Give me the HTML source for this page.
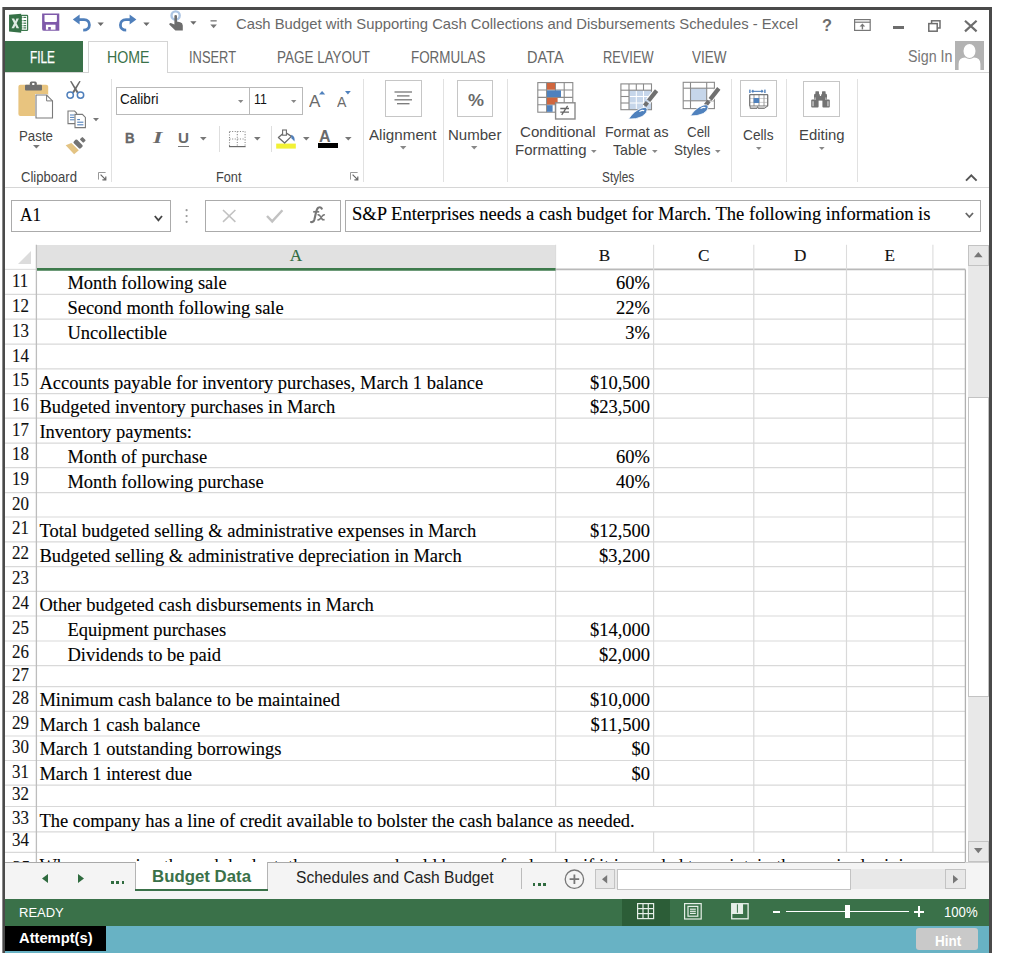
<!DOCTYPE html>
<html><head><meta charset="utf-8"><title>Excel</title>
<style>
html,body{margin:0;padding:0;width:1024px;height:958px;overflow:hidden;background:#fff;position:relative}
svg{display:block}
.sf{-webkit-text-stroke:0.12px currentColor}
</style></head><body>
<svg style="position:absolute;left:6px;top:11px;overflow:visible" width="26" height="24" viewBox="0 0 26 24">
<rect x="15.2" y="4.3" width="6.4" height="15" rx="0.6" fill="#fff" stroke="#3d7a4e" stroke-width="1.2"/>
<g fill="#3d7a4e"><rect x="17.4" y="5.8" width="2.8" height="1.2"/><rect x="17.4" y="9" width="2.8" height="1.2"/><rect x="17.4" y="11.6" width="2.8" height="1.2"/><rect x="17.4" y="14.1" width="2.8" height="1.2"/><rect x="17.4" y="16.3" width="2.8" height="1.2"/>
<rect x="15" y="5.8" width="1.4" height="1.2"/><rect x="15" y="9" width="1.4" height="1.2"/><rect x="15" y="11.6" width="1.4" height="1.2"/><rect x="15" y="14.1" width="1.4" height="1.2"/><rect x="15" y="16.3" width="1.4" height="1.2"/></g>
<path d="M3.05 3.8 L15.2 2.8 L15.2 21.8 L3.05 20.6 Z" fill="#367147"/>
<path d="M5.6 7.6 L8.2 7.6 L9.3 10.2 L10.4 7.6 L12.9 7.6 L10.6 12.3 L13.1 17.3 L10.5 17.3 L9.3 14.6 L8.1 17.3 L5.5 17.3 L8 12.3 Z" fill="#dfeae2"/>
</svg>
<svg style="position:absolute;left:38px;top:10px;overflow:visible" width="26" height="24" viewBox="0 0 26 24">
<path d="M4.1 3.55 L21.3 3.55 L21.3 20.8 L6 20.8 Q4.1 20.8 4.1 18.9 Z" fill="#7f5aaa"/>
<path d="M6.5 4.95 L18.9 4.95 L18.9 10.9 Q18.9 11.9 17.9 11.9 L7.5 11.9 Q6.5 11.9 6.5 10.9 Z" fill="#fff"/>
<rect x="7.9" y="14.7" width="9.6" height="5" fill="#fff"/>
<rect x="10.2" y="17" width="2.6" height="2.8" fill="#7f5aaa"/>
</svg>
<svg style="position:absolute;left:72px;top:14px;overflow:visible" width="20" height="18" viewBox="0 0 20 18">
<path d="M3 5.6 L12 5.6 C15.6 5.6 17.4 8.2 17.4 11 C17.4 13.8 15.2 16.2 11.2 16.2" fill="none" stroke="#4f7fbb" stroke-width="2.8"/>
<path d="M0.8 5.6 L7.6 0.6 L7.6 10.6 Z" fill="#4f7fbb"/>
</svg>
<svg style="position:absolute;left:97px;top:21.8px;overflow:visible" width="8" height="5" viewBox="0 0 8 5"><path d="M0.5 0.5 L6.8 0.5 L3.65 4 Z" fill="#6a6a6a"/></svg>
<svg style="position:absolute;left:118px;top:14px;overflow:visible" width="20" height="18" viewBox="0 0 20 18">
<path d="M16 5.6 L8 5.6 C4.4 5.6 2.4 8.2 2.4 11 C2.4 13.8 4.6 16.2 8.2 16.2" fill="none" stroke="#4f7fbb" stroke-width="2.8"/>
<path d="M18.4 5.6 L11.6 0.6 L11.6 10.6 Z" fill="#4f7fbb"/>
</svg>
<svg style="position:absolute;left:143px;top:22px;overflow:visible" width="8" height="5" viewBox="0 0 8 5"><path d="M0.3 0.4 L6.6 0.4 L3.45 3.9 Z" fill="#6a6a6a"/></svg>
<svg style="position:absolute;left:167px;top:10px;overflow:visible" width="18" height="22" viewBox="0 0 18 22">
<circle cx="8.6" cy="5.5" r="4.1" fill="none" stroke="#adc5e3" stroke-width="2.4"/>
<path d="M7.4 5.6 Q8.7 4.4 10 5.6 L10 11.4 L13.2 12.2 Q15.6 12.8 15.8 15.4 L15.8 20.4 L8.4 20.4 L2.2 14.6 Q2.2 12.6 4.4 13.2 L7.4 14.6 Z" fill="#6d6d6d"/>
</svg>
<svg style="position:absolute;left:190px;top:21px;overflow:visible" width="8" height="5" viewBox="0 0 8 5"><path d="M0.3 0.2 L6.5 0.2 L3.4 3.8 Z" fill="#6a6a6a"/></svg>
<svg style="position:absolute;left:209.5px;top:20px;overflow:visible" width="8" height="9" viewBox="0 0 8 9"><rect x="0.5" y="0.2" width="6.2" height="1.3" fill="#777"/><path d="M0.3 4.4 L6.9 4.4 L3.6 8.2 Z" fill="#777"/></svg>
<span style="position:absolute;left:236.00px;top:16.02px;line-height:16.76px;font-family:'Liberation Sans', sans-serif;font-size:15px;font-weight:400;color:#686868;white-space:pre;transform:scaleX(0.9883);transform-origin:left 0;">Cash Budget with Supporting Cash Collections and Disbursements Schedules - Excel</span>
<span style="position:absolute;left:821.50px;top:16.52px;line-height:17.88px;font-family:'Liberation Sans', sans-serif;font-size:16px;font-weight:700;color:#6d6d6d;white-space:pre;transform:scaleX(1.0224);transform-origin:left 0;">?</span>
<svg style="position:absolute;left:854px;top:19px;overflow:visible" width="17" height="12" viewBox="0 0 17 12">
<rect x="0.6" y="0.6" width="15.6" height="10.8" fill="none" stroke="#777" stroke-width="1.2"/>
<line x1="0.6" y1="3.2" x2="16.2" y2="3.2" stroke="#777" stroke-width="1.2"/>
<path d="M8.4 4.6 L11.2 7.4 L5.6 7.4 Z" fill="#777"/><rect x="7.7" y="7" width="1.4" height="3.4" fill="#777"/>
</svg>
<div style="position:absolute;left:893px;top:26px;width:11px;height:2.6px;background:#6d6d6d"></div>
<svg style="position:absolute;left:928px;top:19.5px;overflow:visible" width="13" height="12" viewBox="0 0 13 12">
<rect x="3.6" y="0.8" width="8.4" height="7.2" fill="none" stroke="#6d6d6d" stroke-width="1.5"/>
<rect x="0.8" y="3.6" width="8.4" height="7.6" fill="#fff" stroke="#6d6d6d" stroke-width="1.5"/>
</svg>
<svg style="position:absolute;left:964px;top:19.5px;overflow:visible" width="13.5" height="12" viewBox="0 0 13.5 12"><path d="M1 0.8 L12.6 11.4 M12.6 0.8 L1 11.4" stroke="#6d6d6d" stroke-width="2.2"/></svg>
<div style="position:absolute;left:5px;top:41px;width:78px;height:31px;background:#3a7149"></div>
<span style="position:absolute;left:30.00px;top:49.18px;line-height:17.43px;font-family:'Liberation Sans', sans-serif;font-size:15.6px;font-weight:400;color:#fff;white-space:pre;transform:scaleX(0.7590);transform-origin:left 0;-webkit-text-stroke:0.25px #fff;">FILE</span>
<div style="position:absolute;left:5px;top:72px;width:83px;height:1px;background:#d4d4d4"></div>
<div style="position:absolute;left:168px;top:72px;width:821px;height:1px;background:#d4d4d4"></div>
<div style="position:absolute;left:88px;top:41px;width:80px;height:32px;box-sizing:border-box;border:1px solid #d4d4d4;border-bottom:none;background:#fff"></div>
<span style="position:absolute;left:107.00px;top:49.18px;line-height:17.43px;font-family:'Liberation Sans', sans-serif;font-size:15.6px;font-weight:400;color:#3a7149;white-space:pre;transform:scaleX(0.9085);transform-origin:left 0;">HOME</span>
<span style="position:absolute;left:188.80px;top:49.18px;line-height:17.43px;font-family:'Liberation Sans', sans-serif;font-size:15.6px;font-weight:400;color:#666;white-space:pre;transform:scaleX(0.8259);transform-origin:left 0;">INSERT</span>
<span style="position:absolute;left:277.00px;top:49.18px;line-height:17.43px;font-family:'Liberation Sans', sans-serif;font-size:15.6px;font-weight:400;color:#666;white-space:pre;transform:scaleX(0.8631);transform-origin:left 0;">PAGE LAYOUT</span>
<span style="position:absolute;left:411.00px;top:49.18px;line-height:17.43px;font-family:'Liberation Sans', sans-serif;font-size:15.6px;font-weight:400;color:#666;white-space:pre;transform:scaleX(0.8597);transform-origin:left 0;">FORMULAS</span>
<span style="position:absolute;left:526.60px;top:49.18px;line-height:17.43px;font-family:'Liberation Sans', sans-serif;font-size:15.6px;font-weight:400;color:#666;white-space:pre;transform:scaleX(0.9317);transform-origin:left 0;">DATA</span>
<span style="position:absolute;left:603.00px;top:49.18px;line-height:17.43px;font-family:'Liberation Sans', sans-serif;font-size:15.6px;font-weight:400;color:#666;white-space:pre;transform:scaleX(0.8209);transform-origin:left 0;">REVIEW</span>
<span style="position:absolute;left:692.00px;top:49.18px;line-height:17.43px;font-family:'Liberation Sans', sans-serif;font-size:15.6px;font-weight:400;color:#666;white-space:pre;transform:scaleX(0.8655);transform-origin:left 0;">VIEW</span>
<span style="position:absolute;left:907.50px;top:48.08px;line-height:17.43px;font-family:'Liberation Sans', sans-serif;font-size:15.6px;font-weight:400;color:#777;white-space:pre;transform:scaleX(0.9163);transform-origin:left 0;">Sign In</span>
<svg style="position:absolute;left:955px;top:41px;overflow:visible" width="29" height="29" viewBox="0 0 29 29">
<rect width="29" height="29" fill="#b3b3b3"/>
<ellipse cx="14.5" cy="10" rx="6" ry="7" fill="#fff"/>
<path d="M3.6 29 L3.6 23 Q3.6 17 10 16.6 Q14.5 19.4 19 16.6 Q25.4 17 25.4 23 L25.4 29 Z" fill="#fff"/>
</svg>
<div style="position:absolute;left:5px;top:186.5px;width:984px;height:1px;background:#d6d6d6"></div>
<div style="position:absolute;left:110.5px;top:78.5px;width:1px;height:103px;background:#e1e1e1"></div>
<div style="position:absolute;left:362.5px;top:78.5px;width:1px;height:103px;background:#e1e1e1"></div>
<div style="position:absolute;left:442.5px;top:78.5px;width:1px;height:103px;background:#e1e1e1"></div>
<div style="position:absolute;left:506.5px;top:78.5px;width:1px;height:103px;background:#e1e1e1"></div>
<div style="position:absolute;left:730.5px;top:78.5px;width:1px;height:103px;background:#e1e1e1"></div>
<div style="position:absolute;left:786.2px;top:78.5px;width:1px;height:103px;background:#e1e1e1"></div>
<div style="position:absolute;left:856.6px;top:78.5px;width:1px;height:103px;background:#e1e1e1"></div>
<svg style="position:absolute;left:18px;top:81px;overflow:visible" width="36" height="38" viewBox="0 0 36 38">
<rect x="0.4" y="3.8" width="29.8" height="31.2" rx="2" fill="#e8c47f"/>
<rect x="7" y="3.8" width="17" height="5.6" rx="1" fill="#6f6f6f"/>
<rect x="11.8" y="0.6" width="7" height="5" rx="1.6" fill="#6f6f6f"/>
<rect x="14.2" y="2" width="2.2" height="2" fill="#fff"/>
<path d="M17 13 L29 13 L35.5 19.5 L35.5 38 L17 38 Z" fill="#fff"/>
<path d="M18 14 L28.6 14 L34.5 19.9 L34.5 37 L18 37 Z" fill="#fff" stroke="#7a7a7a" stroke-width="1.1"/>
<path d="M28.6 14 L28.6 19.9 L34.5 19.9" fill="none" stroke="#7a7a7a" stroke-width="1"/>
</svg>
<span style="position:absolute;left:19.30px;top:128.18px;line-height:16.31px;font-family:'Liberation Sans', sans-serif;font-size:14.6px;font-weight:400;color:#444;white-space:pre;transform:scaleX(0.9108);transform-origin:left 0;">Paste</span>
<svg style="position:absolute;left:33px;top:145px;overflow:visible" width="7" height="4" viewBox="0 0 7 4"><path d="M0 0 L6.8 0 L3.4 3.4 Z" fill="#777"/></svg>
<svg style="position:absolute;left:66px;top:80px;overflow:visible" width="19" height="20" viewBox="0 0 19 20">
<path d="M4 1.2 L5.4 0.9 L12.6 12.2 L10.8 13.2 Z" fill="#6a6a6a"/>
<path d="M14.7 1.2 L13.3 0.9 L6.1 12.2 L7.9 13.2 Z" fill="#6a6a6a"/>
<circle cx="4.2" cy="15.1" r="3.2" fill="none" stroke="#4f7fbb" stroke-width="1.5"/>
<circle cx="14.5" cy="15.1" r="3.2" fill="none" stroke="#4f7fbb" stroke-width="1.5"/>
</svg>
<svg style="position:absolute;left:66.5px;top:109.5px;overflow:visible" width="20" height="19" viewBox="0 0 20 19">
<path d="M1 1 L7.6 1 L9.6 3 L9.6 13.6 L1 13.6 Z" fill="#fff" stroke="#7a7a7a" stroke-width="1.1"/>
<g stroke="#4f7fbb" stroke-width="1"><line x1="3" y1="5" x2="7.5" y2="5"/><line x1="3" y1="7.4" x2="7.5" y2="7.4"/><line x1="3" y1="9.8" x2="7.5" y2="9.8"/></g>
<path d="M8 4.4 L15.4 4.4 L18.4 7.4 L18.4 17.6 L8 17.6 Z" fill="#fff" stroke="#7a7a7a" stroke-width="1.1"/>
<g stroke="#4f7fbb" stroke-width="1.1"><line x1="10.2" y1="9.6" x2="13" y2="9.6"/><line x1="10.2" y1="12.2" x2="16.4" y2="12.2"/><line x1="10.2" y1="14.8" x2="16.4" y2="14.8"/></g>
</svg>
<svg style="position:absolute;left:93px;top:117.6px;overflow:visible" width="7" height="4" viewBox="0 0 7 4"><path d="M0 0 L6 0 L3 3.2 Z" fill="#777"/></svg>
<svg style="position:absolute;left:60px;top:132px;overflow:visible" width="30" height="26" viewBox="0 0 30 26">
<path d="M5.7 13.2 L11.4 11.1 L18.8 18.2 L14.1 22.3 Z" fill="#e3c383"/>
<rect x="-4.9" y="-2.4" width="9.8" height="4.8" rx="1.3" fill="#737373" transform="translate(18.1 12.1) rotate(45)"/>
<rect x="-2.5" y="-1.9" width="5" height="3.8" rx="0.9" fill="#737373" transform="translate(22.8 7.9) rotate(45)"/>
</svg>
<span style="position:absolute;left:21.30px;top:169.71px;line-height:15.42px;font-family:'Liberation Sans', sans-serif;font-size:13.8px;font-weight:400;color:#444;white-space:pre;transform:scaleX(0.9481);transform-origin:left 0;">Clipboard</span>
<svg style="position:absolute;left:97.5px;top:172px;overflow:visible" width="9" height="8.5" viewBox="0 0 9 8.5">
<path d="M0.5 7.6 L0.5 0.5 L7.6 0.5" fill="none" stroke="#999" stroke-width="1"/>
<path d="M2.6 2.6 L7.6 7.6 M7.8 4.4 L7.8 7.8 L4.4 7.8" fill="none" stroke="#666" stroke-width="1.2"/>
</svg>
<div style="position:absolute;left:116px;top:87px;width:134px;height:28px;box-sizing:border-box;border:1px solid #b9b9b9;background:#fff"></div>
<div style="position:absolute;left:249px;top:87px;width:54px;height:28px;box-sizing:border-box;border:1px solid #b9b9b9;background:#fff"></div>
<span style="position:absolute;left:120.00px;top:90.98px;line-height:16.31px;font-family:'Liberation Sans', sans-serif;font-size:14.6px;font-weight:400;color:#111;white-space:pre;transform:scaleX(0.9284);transform-origin:left 0;">Calibri</span>
<span style="position:absolute;left:254.40px;top:90.98px;line-height:16.31px;font-family:'Liberation Sans', sans-serif;font-size:14.6px;font-weight:400;color:#111;white-space:pre;transform:scaleX(0.8445);transform-origin:left 0;">11</span>
<svg style="position:absolute;left:237.5px;top:99.5px;overflow:visible" width="6" height="4" viewBox="0 0 6 4"><path d="M0 0 L5.4 0 L2.7 3 Z" fill="#888"/></svg>
<svg style="position:absolute;left:290.6px;top:99.5px;overflow:visible" width="6" height="4" viewBox="0 0 6 4"><path d="M0 0 L5.4 0 L2.7 3 Z" fill="#888"/></svg>
<span style="position:absolute;left:309.40px;top:92.21px;line-height:18.99px;font-family:'Liberation Sans', sans-serif;font-size:17px;font-weight:400;color:#6a6a6a;white-space:pre;transform:scaleX(1.0050);transform-origin:left 0;">A</span>
<svg style="position:absolute;left:319px;top:91.2px;overflow:visible" width="7" height="4" viewBox="0 0 7 4"><path d="M0 3.6 L6.2 3.6 L3.1 0 Z" fill="#4f81bd"/></svg>
<span style="position:absolute;left:336.50px;top:94.93px;line-height:15.64px;font-family:'Liberation Sans', sans-serif;font-size:14px;font-weight:400;color:#6a6a6a;white-space:pre;transform:scaleX(1.0060);transform-origin:left 0;">A</span>
<svg style="position:absolute;left:345.2px;top:91.4px;overflow:visible" width="6" height="4" viewBox="0 0 6 4"><path d="M0 0 L5.8 0 L2.9 3.6 Z" fill="#4f81bd"/></svg>
<span style="position:absolute;left:125.20px;top:129.82px;line-height:16.76px;font-family:'Liberation Sans', sans-serif;font-size:15px;font-weight:700;color:#666;white-space:pre;transform:scaleX(0.8853);transform-origin:left 0;-webkit-text-stroke:0.35px #666;">B</span>
<span class=sf style="position:absolute;left:153.20px;top:128.94px;line-height:17.72px;font-family:'Liberation Serif', serif;font-size:16px;font-weight:700;color:#6a6a6a;white-space:pre;transform:scaleX(1.5078);transform-origin:left 0;font-style:italic;-webkit-text-stroke:0;">I</span>
<span style="position:absolute;left:178.00px;top:130.27px;line-height:16.20px;font-family:'Liberation Sans', sans-serif;font-size:14.5px;font-weight:700;color:#6a6a6a;white-space:pre;transform:scaleX(1.0492);transform-origin:left 0;">U</span>
<div style="position:absolute;left:178.2px;top:146px;width:10.8px;height:1.2px;background:#777"></div>
<svg style="position:absolute;left:200px;top:137px;overflow:visible" width="7" height="4" viewBox="0 0 7 4"><path d="M0 0 L6.6 0 L3.3 3.4 Z" fill="#777"/></svg>
<div style="position:absolute;left:218.5px;top:125.5px;width:1px;height:26px;background:#dedede"></div>
<svg style="position:absolute;left:228.5px;top:130.5px;overflow:visible" width="17" height="17" viewBox="0 0 17 17">
<g fill="none" stroke="#8a8a8a" stroke-width="1.1" stroke-dasharray="1.1 1.5"><rect x="0.5" y="0.5" width="15.6" height="15"/><line x1="8.3" y1="0.5" x2="8.3" y2="15.5"/><line x1="0.5" y1="8" x2="16.1" y2="8"/></g>
<line x1="0" y1="15.6" x2="16.6" y2="15.6" stroke="#6a6a6a" stroke-width="1.2"/>
</svg>
<svg style="position:absolute;left:253.5px;top:137px;overflow:visible" width="7" height="4" viewBox="0 0 7 4"><path d="M0 0 L6.6 0 L3.3 3.4 Z" fill="#777"/></svg>
<div style="position:absolute;left:271px;top:125.5px;width:1px;height:26px;background:#dedede"></div>
<svg style="position:absolute;left:276px;top:128.5px;overflow:visible" width="21" height="21" viewBox="0 0 21 21">
<rect x="0.2" y="14.6" width="19.6" height="5" fill="#f2f135"/>
<path d="M2.4 8.6 L8.8 3 L15.4 7.4 L8.6 14 Z" fill="#fff" stroke="#6a6a6a" stroke-width="1.3" stroke-linejoin="round"/>
<rect x="6.6" y="1" width="3.8" height="5.2" fill="#fff" stroke="#6a6a6a" stroke-width="1.1"/>
<path d="M15.2 5.8 Q19.6 7.6 18.4 12.6 Q17 10.4 15.4 9.6 Z" fill="#4f7fbb"/>
</svg>
<svg style="position:absolute;left:302.8px;top:137px;overflow:visible" width="7" height="4" viewBox="0 0 7 4"><path d="M0 0 L6.6 0 L3.3 3.4 Z" fill="#777"/></svg>
<span style="position:absolute;left:319.40px;top:128.12px;line-height:17.88px;font-family:'Liberation Sans', sans-serif;font-size:16px;font-weight:700;color:#6a6a6a;white-space:pre;transform:scaleX(1.0032);transform-origin:left 0;">A</span>
<div style="position:absolute;left:317.6px;top:143.3px;width:20px;height:5px;background:#000"></div>
<svg style="position:absolute;left:344.8px;top:137px;overflow:visible" width="7" height="4" viewBox="0 0 7 4"><path d="M0 0 L6.6 0 L3.3 3.4 Z" fill="#777"/></svg>
<span style="position:absolute;left:216.00px;top:169.91px;line-height:15.42px;font-family:'Liberation Sans', sans-serif;font-size:13.8px;font-weight:400;color:#444;white-space:pre;transform:scaleX(0.9236);transform-origin:left 0;">Font</span>
<svg style="position:absolute;left:350px;top:172.4px;overflow:visible" width="9" height="8.5" viewBox="0 0 9 8.5">
<path d="M0.5 7.6 L0.5 0.5 L7.6 0.5" fill="none" stroke="#999" stroke-width="1"/>
<path d="M2.6 2.6 L7.6 7.6 M7.8 4.4 L7.8 7.8 L4.4 7.8" fill="none" stroke="#666" stroke-width="1.2"/>
</svg>
<div style="position:absolute;left:385px;top:80.4px;width:37px;height:37px;box-sizing:border-box;border:1px solid #c6c6c6;background:#fff"></div>
<svg style="position:absolute;left:394px;top:90.6px;overflow:visible" width="19" height="14" viewBox="0 0 19 14">
<g stroke="#777" stroke-width="1.3"><line x1="0.5" y1="1" x2="18" y2="1"/><line x1="3" y1="4.9" x2="15.5" y2="4.9"/><line x1="0.5" y1="8.8" x2="18" y2="8.8"/><line x1="3" y1="12.7" x2="15.5" y2="12.7"/></g>
</svg>
<span style="position:absolute;left:369.00px;top:127.22px;line-height:16.76px;font-family:'Liberation Sans', sans-serif;font-size:15px;font-weight:400;color:#444;white-space:pre;transform:scaleX(1.0119);transform-origin:left 0;">Alignment</span>
<svg style="position:absolute;left:399.5px;top:146px;overflow:visible" width="7" height="4" viewBox="0 0 7 4"><path d="M0 0 L6.4 0 L3.2 3.4 Z" fill="#888"/></svg>
<div style="position:absolute;left:456.5px;top:80.4px;width:36.5px;height:37px;box-sizing:border-box;border:1px solid #c6c6c6;background:#fff"></div>
<span style="position:absolute;left:467.60px;top:91.21px;line-height:18.99px;font-family:'Liberation Sans', sans-serif;font-size:17px;font-weight:700;color:#6a6a6a;white-space:pre;transform:scaleX(1.0579);transform-origin:left 0;">%</span>
<span style="position:absolute;left:448.00px;top:127.22px;line-height:16.76px;font-family:'Liberation Sans', sans-serif;font-size:15px;font-weight:400;color:#444;white-space:pre;transform:scaleX(1.0026);transform-origin:left 0;">Number</span>
<svg style="position:absolute;left:471px;top:146px;overflow:visible" width="7" height="4" viewBox="0 0 7 4"><path d="M0 0 L6.4 0 L3.2 3.4 Z" fill="#888"/></svg>
<svg style="position:absolute;left:537px;top:81.5px;overflow:visible" width="39" height="38" viewBox="0 0 39 38">
<g fill="none" stroke="#8a8a8a" stroke-width="1.1">
<rect x="0.8" y="0.6" width="35" height="29.6"/>
<line x1="9.6" y1="0.6" x2="9.6" y2="30.2"/><line x1="18.4" y1="0.6" x2="18.4" y2="30.2"/><line x1="27.2" y1="0.6" x2="27.2" y2="30.2"/>
<line x1="0.8" y1="8" x2="35.8" y2="8"/><line x1="0.8" y1="15.4" x2="35.8" y2="15.4"/><line x1="0.8" y1="22.8" x2="35.8" y2="22.8"/>
</g>
<rect x="10" y="1" width="8" height="6.6" fill="#d0663e"/>
<rect x="10" y="8.4" width="14" height="6.6" fill="#4f81bd"/>
<rect x="10" y="15.8" width="10.6" height="6.6" fill="#d0663e"/>
<rect x="10" y="23.2" width="5.6" height="6.6" fill="#4f81bd"/>
<rect x="18.6" y="20.8" width="19.4" height="16.2" fill="#fff" stroke="#8a8a8a" stroke-width="1.4"/>
<path d="M23.3 26.5 L32 26.5 M23.3 30.2 L32 30.2 M30.6 23.8 L24.7 32.9" stroke="#666" stroke-width="1.3" fill="none"/>
</svg>
<span style="position:absolute;left:519.50px;top:123.82px;line-height:16.76px;font-family:'Liberation Sans', sans-serif;font-size:15px;font-weight:400;color:#444;white-space:pre;transform:scaleX(1.0058);transform-origin:left 0;">Conditional</span>
<span style="position:absolute;left:514.80px;top:142.12px;line-height:16.76px;font-family:'Liberation Sans', sans-serif;font-size:15px;font-weight:400;color:#444;white-space:pre;transform:scaleX(0.9972);transform-origin:left 0;">Formatting</span>
<svg style="position:absolute;left:590.5px;top:150.4px;overflow:visible" width="6" height="4" viewBox="0 0 6 4"><path d="M0 0 L5.6 0 L2.8 3 Z" fill="#888"/></svg>
<svg style="position:absolute;left:615px;top:78px;overflow:visible" width="110" height="44" viewBox="0 0 110 44">
<rect x="14" y="12.2" width="22.5" height="19.5" fill="#c6d6ea"/>
<g stroke="#fff" stroke-width="1"><line x1="21.3" y1="12.6" x2="21.3" y2="31.3"/><line x1="28.5" y1="12.6" x2="28.5" y2="31.3"/><line x1="14.4" y1="18.5" x2="36.1" y2="18.5"/><line x1="14.4" y1="25" x2="36.1" y2="25"/></g>
<g fill="none" stroke="#8a8a8a" stroke-width="1.1">
<rect x="5.9" y="5.9" width="30.6" height="25.8"/>
<line x1="14" y1="5.9" x2="14" y2="31.7"/><line x1="21.3" y1="5.9" x2="21.3" y2="12.2"/><line x1="28.5" y1="5.9" x2="28.5" y2="12.2"/>
<line x1="5.9" y1="12.2" x2="36.5" y2="12.2"/><line x1="5.9" y1="18.5" x2="14" y2="18.5"/><line x1="5.9" y1="25" x2="14" y2="25"/>
</g>
<path d="M41.6 12.6 L33.6 22.8" stroke="#fff" stroke-width="6.4"/>
<path d="M41.6 12.6 L33.6 22.8" stroke="#707070" stroke-width="4.2"/>
<path d="M32.4 24.2 L29.6 27.8" stroke="#707070" stroke-width="4.2"/>
<path d="M13.6 41 Q18.6 33 26.8 30 Q31.6 28.4 32.2 31.6 Q32.6 35 27 38.6 Q21 41.6 13.6 41 Z" fill="#4f81bd" stroke="#fff" stroke-width="0.8"/>
<path d="M24.4 33.6 Q27.4 31.6 29.2 32.8" stroke="#fff" stroke-width="1.1" fill="none"/>
</svg>
<span style="position:absolute;left:605.30px;top:123.82px;line-height:16.76px;font-family:'Liberation Sans', sans-serif;font-size:15px;font-weight:400;color:#444;white-space:pre;transform:scaleX(0.9405);transform-origin:left 0;">Format as</span>
<span style="position:absolute;left:613.30px;top:142.12px;line-height:16.76px;font-family:'Liberation Sans', sans-serif;font-size:15px;font-weight:400;color:#444;white-space:pre;transform:scaleX(0.9481);transform-origin:left 0;">Table</span>
<svg style="position:absolute;left:652px;top:150.4px;overflow:visible" width="6" height="4" viewBox="0 0 6 4"><path d="M0 0 L5.6 0 L2.8 3 Z" fill="#888"/></svg>
<svg style="position:absolute;left:615px;top:78px;overflow:visible" width="110" height="44" viewBox="0 0 110 44">
<rect x="75.5" y="10.2" width="16.2" height="12.6" fill="#c6d6ea"/>
<g fill="none" stroke="#8a8a8a" stroke-width="1.1">
<rect x="68.2" y="4.3" width="31.2" height="26.3"/>
<line x1="75.5" y1="4.3" x2="75.5" y2="30.6"/><line x1="91.7" y1="4.3" x2="91.7" y2="30.6"/>
<line x1="68.2" y1="10.2" x2="99.4" y2="10.2"/><line x1="68.2" y1="22.8" x2="99.4" y2="22.8"/>
</g>
<path d="M103.8 10.4 L95.2 21.4" stroke="#fff" stroke-width="6.4"/>
<path d="M103.8 10.4 L95.2 21.4" stroke="#707070" stroke-width="4.2"/>
<path d="M94 23 L90.6 27.2" stroke="#707070" stroke-width="4.2"/>
<path d="M75.4 37.8 Q80.2 30 88.2 27.2 Q92.8 25.8 93.2 29 Q93.4 32.4 88.2 35.6 Q82 38.4 75.4 37.8 Z" fill="#4f81bd" stroke="#fff" stroke-width="0.8"/>
<path d="M85.6 30.6 Q88.6 28.6 90.4 29.8" stroke="#fff" stroke-width="1.1" fill="none"/>
</svg>
<span style="position:absolute;left:687.30px;top:123.82px;line-height:16.76px;font-family:'Liberation Sans', sans-serif;font-size:15px;font-weight:400;color:#444;white-space:pre;transform:scaleX(0.8900);transform-origin:left 0;">Cell</span>
<span style="position:absolute;left:673.70px;top:142.12px;line-height:16.76px;font-family:'Liberation Sans', sans-serif;font-size:15px;font-weight:400;color:#444;white-space:pre;transform:scaleX(0.8933);transform-origin:left 0;">Styles</span>
<svg style="position:absolute;left:714.8px;top:150.4px;overflow:visible" width="6" height="4" viewBox="0 0 6 4"><path d="M0 0 L5.6 0 L2.8 3 Z" fill="#888"/></svg>
<span style="position:absolute;left:602.30px;top:169.91px;line-height:15.42px;font-family:'Liberation Sans', sans-serif;font-size:13.8px;font-weight:400;color:#444;white-space:pre;transform:scaleX(0.8569);transform-origin:left 0;">Styles</span>
<div style="position:absolute;left:739.8px;top:80px;width:37px;height:37px;box-sizing:border-box;border:1px solid #c6c6c6;background:#fff"></div>
<svg style="position:absolute;left:749px;top:88.5px;overflow:visible" width="20" height="21" viewBox="0 0 20 21">
<g fill="#4f81bd"><rect x="0.2" y="0.6" width="1.4" height="3.4"/><rect x="15.2" y="0.6" width="1.4" height="3.4"/>
<rect x="3" y="1.8" width="10.8" height="1.1"/><path d="M2.2 2.35 L4 0.6 L5 2.35 L4 4.1 Z"/><path d="M14.6 2.35 L12.8 0.6 L11.8 2.35 L12.8 4.1 Z"/></g>
<g stroke="#d0d0d0" stroke-width="1"><line x1="1" y1="9.5" x2="18" y2="9.5"/><line x1="1" y1="13.4" x2="18" y2="13.4"/></g>
<g stroke="#9a9a9a" stroke-width="1"><line x1="5" y1="6" x2="5" y2="17"/><line x1="10" y1="6" x2="10" y2="17"/><line x1="15" y1="6" x2="15" y2="17"/></g>
<rect x="0.7" y="5.6" width="18" height="11.6" rx="0.6" fill="none" stroke="#777" stroke-width="1.3"/>
<rect x="4.6" y="9" width="5.6" height="5" fill="#4f81bd"/>
<path d="M1.2 17.2 L1.2 19.4 L8 19.4 L8.6 17.6 L9.2 19.4 L15.4 19.4 L18.4 17.2" fill="#cfcfcf" stroke="#777" stroke-width="1"/>
</svg>
<span style="position:absolute;left:743.30px;top:127.42px;line-height:16.76px;font-family:'Liberation Sans', sans-serif;font-size:15px;font-weight:400;color:#444;white-space:pre;transform:scaleX(0.9147);transform-origin:left 0;">Cells</span>
<svg style="position:absolute;left:756px;top:147.2px;overflow:visible" width="6" height="4" viewBox="0 0 6 4"><path d="M0 0 L5.6 0 L2.8 3 Z" fill="#888"/></svg>
<div style="position:absolute;left:802.9px;top:80.6px;width:37px;height:36px;box-sizing:border-box;border:1px solid #c6c6c6;background:#fff"></div>
<svg style="position:absolute;left:811px;top:91px;overflow:visible" width="19" height="17" viewBox="0 0 19 17">
<g fill="#737373">
<rect x="4.4" y="0.2" width="3.6" height="3.6" rx="0.6"/><rect x="11" y="0.2" width="3.6" height="3.6" rx="0.6"/>
<rect x="3" y="2.8" width="5.8" height="6.6" rx="1.4"/><rect x="10.2" y="2.8" width="5.8" height="6.6" rx="1.4"/>
<rect x="0.2" y="8.6" width="7.4" height="7.8" rx="1"/><rect x="11.4" y="8.6" width="7.4" height="7.8" rx="1"/>
<rect x="7.4" y="5" width="4.2" height="4.6"/>
</g>
<rect x="1.4" y="10.2" width="1.3" height="5" fill="#cfcfcf"/><rect x="16.3" y="10.2" width="1.3" height="5" fill="#cfcfcf"/>
<rect x="3.6" y="6.4" width="1" height="2.6" fill="#cfcfcf"/><rect x="14.4" y="6.4" width="1" height="2.6" fill="#cfcfcf"/>
</svg>
<span style="position:absolute;left:798.80px;top:127.42px;line-height:16.76px;font-family:'Liberation Sans', sans-serif;font-size:15px;font-weight:400;color:#444;white-space:pre;transform:scaleX(0.9918);transform-origin:left 0;">Editing</span>
<svg style="position:absolute;left:819.2px;top:147.2px;overflow:visible" width="6" height="4" viewBox="0 0 6 4"><path d="M0 0 L5.6 0 L2.8 3 Z" fill="#888"/></svg>
<svg style="position:absolute;left:965px;top:173.5px;overflow:visible" width="13" height="8" viewBox="0 0 13 8"><path d="M1 6.6 L6.3 1.4 L11.6 6.6" fill="none" stroke="#555" stroke-width="2"/></svg>
<div style="position:absolute;left:11px;top:200px;width:160px;height:32px;box-sizing:border-box;border:1px solid #ababab;background:#fff"></div>
<span class=sf style="position:absolute;left:20.20px;top:204.91px;line-height:20.49px;font-family:'Liberation Serif', serif;font-size:18.5px;font-weight:400;color:#000;white-space:pre;transform:scaleX(0.9282);transform-origin:left 0;">A1</span>
<svg style="position:absolute;left:154.4px;top:215px;overflow:visible" width="9" height="8" viewBox="0 0 9 8"><path d="M0.8 1 L4.4 5.4 L8 1" fill="none" stroke="#444" stroke-width="1.8"/></svg>
<svg style="position:absolute;left:184px;top:208px;overflow:visible" width="6" height="16" viewBox="0 0 6 16"><circle cx="2.6" cy="2.2" r="1.1" fill="#999"/><circle cx="2.6" cy="8" r="1.1" fill="#999"/><circle cx="2.6" cy="13.8" r="1.1" fill="#999"/></svg>
<div style="position:absolute;left:205px;top:200px;width:136px;height:32px;box-sizing:border-box;border:1px solid #ababab;background:#fff"></div>
<svg style="position:absolute;left:221.5px;top:208.6px;overflow:visible" width="15" height="14" viewBox="0 0 15 14"><path d="M1 1 L13.4 12.8 M13.4 1 L1 12.8" stroke="#c2c2c2" stroke-width="1.6"/></svg>
<svg style="position:absolute;left:265.5px;top:208.6px;overflow:visible" width="18" height="14" viewBox="0 0 18 14"><path d="M1 7 L6.2 12.4 L16.4 1.2" fill="none" stroke="#c2c2c2" stroke-width="2.4"/></svg>
<svg style="position:absolute;left:308px;top:205px;overflow:visible" width="20" height="20" viewBox="0 0 20 20"><path d="M13.8 3.6 Q12.6 1.6 10.4 2.6 Q8.8 3.6 8 7.6 L6.4 14.6 Q5.6 17.6 3 17" fill="none" stroke="#777" stroke-width="2.1" stroke-linecap="round"/><path d="M5.2 6.8 L11.2 6.8" stroke="#777" stroke-width="1.7"/><path d="M9.6 10.2 Q11 9.2 12.2 11.2 L14 14 Q14.8 15.2 16.6 14.6 M16.8 10 Q15.4 9.4 14 11.4 L12.2 13.8 Q11.2 15.2 9.4 14.8" fill="none" stroke="#777" stroke-width="1.6"/></svg>
<div style="position:absolute;left:345px;top:200px;width:636px;height:32px;box-sizing:border-box;border:1px solid #ababab;background:#fff"></div>
<span class=sf style="position:absolute;left:351.50px;top:204.21px;line-height:20.49px;font-family:'Liberation Serif', serif;font-size:18.5px;font-weight:400;color:#000;white-space:pre;transform:scaleX(1.0035);transform-origin:left 0;">S&amp;P Enterprises needs a cash budget for March. The following information is</span>
<svg style="position:absolute;left:964.8px;top:211.6px;overflow:visible" width="9" height="7" viewBox="0 0 9 7"><path d="M0.8 1 L4.4 5 L8 1" fill="none" stroke="#666" stroke-width="1.8"/></svg>
<div style="position:absolute;left:37px;top:244.8px;width:518.6px;height:25.599999999999966px;background:#e1e1e1"></div>
<svg style="position:absolute;left:17px;top:250px;overflow:visible" width="15" height="15" viewBox="0 0 15 15"><path d="M14 1 L14 14 L1 14 Z" fill="#dcdcdc"/></svg>
<svg style="position:absolute;left:0px;top:0px;overflow:visible" width="1024" height="958" viewBox="0 0 1024 958"><line x1="5" y1="294.4" x2="965.4" y2="294.4" stroke="#d9d9d9" stroke-width="1.2"/><line x1="5" y1="319.2" x2="965.4" y2="319.2" stroke="#d9d9d9" stroke-width="1.2"/><line x1="5" y1="344.2" x2="965.4" y2="344.2" stroke="#d9d9d9" stroke-width="1.2"/><line x1="5" y1="368.9" x2="965.4" y2="368.9" stroke="#d9d9d9" stroke-width="1.2"/><line x1="5" y1="393.6" x2="965.4" y2="393.6" stroke="#d9d9d9" stroke-width="1.2"/><line x1="5" y1="418.2" x2="965.4" y2="418.2" stroke="#d9d9d9" stroke-width="1.2"/><line x1="5" y1="443.2" x2="965.4" y2="443.2" stroke="#d9d9d9" stroke-width="1.2"/><line x1="5" y1="467.7" x2="965.4" y2="467.7" stroke="#d9d9d9" stroke-width="1.2"/><line x1="5" y1="492.6" x2="965.4" y2="492.6" stroke="#d9d9d9" stroke-width="1.2"/><line x1="5" y1="517.0" x2="965.4" y2="517.0" stroke="#d9d9d9" stroke-width="1.2"/><line x1="5" y1="541.8" x2="965.4" y2="541.8" stroke="#d9d9d9" stroke-width="1.2"/><line x1="5" y1="566.6" x2="965.4" y2="566.6" stroke="#d9d9d9" stroke-width="1.2"/><line x1="5" y1="591.3" x2="965.4" y2="591.3" stroke="#d9d9d9" stroke-width="1.2"/><line x1="5" y1="616.0" x2="965.4" y2="616.0" stroke="#d9d9d9" stroke-width="1.2"/><line x1="5" y1="641.0" x2="965.4" y2="641.0" stroke="#d9d9d9" stroke-width="1.2"/><line x1="5" y1="665.6" x2="965.4" y2="665.6" stroke="#d9d9d9" stroke-width="1.2"/><line x1="5" y1="686.7" x2="965.4" y2="686.7" stroke="#d9d9d9" stroke-width="1.2"/><line x1="5" y1="711.3" x2="965.4" y2="711.3" stroke="#d9d9d9" stroke-width="1.2"/><line x1="5" y1="736.0" x2="965.4" y2="736.0" stroke="#d9d9d9" stroke-width="1.2"/><line x1="5" y1="760.5" x2="965.4" y2="760.5" stroke="#d9d9d9" stroke-width="1.2"/><line x1="5" y1="785.2" x2="965.4" y2="785.2" stroke="#d9d9d9" stroke-width="1.2"/><line x1="5" y1="806.5" x2="965.4" y2="806.5" stroke="#d9d9d9" stroke-width="1.2"/><line x1="5" y1="831.8" x2="965.4" y2="831.8" stroke="#d9d9d9" stroke-width="1.2"/><line x1="5" y1="852.4" x2="965.4" y2="852.4" stroke="#d9d9d9" stroke-width="1.2"/><line x1="5" y1="877.0" x2="965.4" y2="877.0" stroke="#d9d9d9" stroke-width="1.2"/><line x1="5" y1="269.4" x2="37" y2="269.4" stroke="#dedede" stroke-width="1.2"/><line x1="555.6" y1="269.4" x2="965.4" y2="269.4" stroke="#b9b9b9" stroke-width="1.6"/><line x1="555.6" y1="244.8" x2="555.6" y2="269.4" stroke="#dcdcdc" stroke-width="1.1"/><line x1="653.6" y1="244.8" x2="653.6" y2="269.4" stroke="#dcdcdc" stroke-width="1.1"/><line x1="753.8" y1="244.8" x2="753.8" y2="269.4" stroke="#dcdcdc" stroke-width="1.1"/><line x1="846.5" y1="244.8" x2="846.5" y2="269.4" stroke="#dcdcdc" stroke-width="1.1"/><line x1="932.9" y1="244.8" x2="932.9" y2="269.4" stroke="#dcdcdc" stroke-width="1.1"/><line x1="653.6" y1="269.4" x2="653.6" y2="806.5" stroke="#d9d9d9" stroke-width="1.2"/><line x1="653.6" y1="831.8" x2="653.6" y2="852.4" stroke="#d9d9d9" stroke-width="1.2"/><line x1="753.8" y1="269.4" x2="753.8" y2="852.4" stroke="#d9d9d9" stroke-width="1.2"/><line x1="846.5" y1="269.4" x2="846.5" y2="852.4" stroke="#d9d9d9" stroke-width="1.2"/><line x1="932.9" y1="269.4" x2="932.9" y2="852.4" stroke="#d9d9d9" stroke-width="1.2"/><line x1="555.6" y1="269.4" x2="555.6" y2="806.5" stroke="#d9d9d9" stroke-width="1.2"/><line x1="555.6" y1="831.8" x2="555.6" y2="852.4" stroke="#d9d9d9" stroke-width="1.2"/><line x1="36.4" y1="244.8" x2="36.4" y2="862.3" stroke="#bdbdbd" stroke-width="1.3"/><line x1="37" y1="269.4" x2="555.6" y2="269.4" stroke="#3e7a4c" stroke-width="2.6"/><line x1="965.4" y1="269.4" x2="965.4" y2="862.3" stroke="#b0b0b0" stroke-width="1.3"/></svg>
<span class=sf style="position:absolute;left:289.79px;top:246.27px;line-height:19.05px;font-family:'Liberation Serif', serif;font-size:17.2px;font-weight:400;color:#2f6b3f;white-space:pre;">A</span>
<span class=sf style="position:absolute;left:598.87px;top:246.27px;line-height:19.05px;font-family:'Liberation Serif', serif;font-size:17.2px;font-weight:400;color:#111;white-space:pre;">B</span>
<span class=sf style="position:absolute;left:697.97px;top:246.27px;line-height:19.05px;font-family:'Liberation Serif', serif;font-size:17.2px;font-weight:400;color:#111;white-space:pre;">C</span>
<span class=sf style="position:absolute;left:793.89px;top:246.27px;line-height:19.05px;font-family:'Liberation Serif', serif;font-size:17.2px;font-weight:400;color:#111;white-space:pre;">D</span>
<span class=sf style="position:absolute;left:884.45px;top:246.27px;line-height:19.05px;font-family:'Liberation Serif', serif;font-size:17.2px;font-weight:400;color:#111;white-space:pre;">E</span>
<span class=sf style="position:absolute;left:12.20px;top:271.00px;line-height:20.38px;font-family:'Liberation Serif', serif;font-size:18.4px;font-weight:400;color:#111;white-space:pre;transform:scaleX(0.92);transform-origin:left 0;">11</span>
<span class=sf style="position:absolute;left:67.40px;top:273.31px;line-height:20.49px;font-family:'Liberation Serif', serif;font-size:18.5px;font-weight:400;color:#000;white-space:pre;">Month following sale</span>
<span class=sf style="position:absolute;left:616.08px;top:273.31px;line-height:20.49px;font-family:'Liberation Serif', serif;font-size:18.5px;font-weight:400;color:#000;white-space:pre;">60%</span>
<span class=sf style="position:absolute;left:12.20px;top:295.80px;line-height:20.38px;font-family:'Liberation Serif', serif;font-size:18.4px;font-weight:400;color:#111;white-space:pre;transform:scaleX(0.92);transform-origin:left 0;">12</span>
<span class=sf style="position:absolute;left:67.40px;top:298.11px;line-height:20.49px;font-family:'Liberation Serif', serif;font-size:18.5px;font-weight:400;color:#000;white-space:pre;">Second month following sale</span>
<span class=sf style="position:absolute;left:616.08px;top:298.11px;line-height:20.49px;font-family:'Liberation Serif', serif;font-size:18.5px;font-weight:400;color:#000;white-space:pre;">22%</span>
<span class=sf style="position:absolute;left:12.20px;top:320.80px;line-height:20.38px;font-family:'Liberation Serif', serif;font-size:18.4px;font-weight:400;color:#111;white-space:pre;transform:scaleX(0.92);transform-origin:left 0;">13</span>
<span class=sf style="position:absolute;left:67.40px;top:323.11px;line-height:20.49px;font-family:'Liberation Serif', serif;font-size:18.5px;font-weight:400;color:#000;white-space:pre;">Uncollectible</span>
<span class=sf style="position:absolute;left:625.33px;top:323.11px;line-height:20.49px;font-family:'Liberation Serif', serif;font-size:18.5px;font-weight:400;color:#000;white-space:pre;">3%</span>
<span class=sf style="position:absolute;left:12.20px;top:345.50px;line-height:20.38px;font-family:'Liberation Serif', serif;font-size:18.4px;font-weight:400;color:#111;white-space:pre;transform:scaleX(0.92);transform-origin:left 0;">14</span>
<span class=sf style="position:absolute;left:12.20px;top:370.20px;line-height:20.38px;font-family:'Liberation Serif', serif;font-size:18.4px;font-weight:400;color:#111;white-space:pre;transform:scaleX(0.92);transform-origin:left 0;">15</span>
<span class=sf style="position:absolute;left:39.40px;top:372.51px;line-height:20.49px;font-family:'Liberation Serif', serif;font-size:18.5px;font-weight:400;color:#000;white-space:pre;">Accounts payable for inventory purchases, March 1 balance</span>
<span class=sf style="position:absolute;left:589.88px;top:372.51px;line-height:20.49px;font-family:'Liberation Serif', serif;font-size:18.5px;font-weight:400;color:#000;white-space:pre;">$10,500</span>
<span class=sf style="position:absolute;left:12.20px;top:394.80px;line-height:20.38px;font-family:'Liberation Serif', serif;font-size:18.4px;font-weight:400;color:#111;white-space:pre;transform:scaleX(0.92);transform-origin:left 0;">16</span>
<span class=sf style="position:absolute;left:39.40px;top:397.11px;line-height:20.49px;font-family:'Liberation Serif', serif;font-size:18.5px;font-weight:400;color:#000;white-space:pre;">Budgeted inventory purchases in March</span>
<span class=sf style="position:absolute;left:589.88px;top:397.11px;line-height:20.49px;font-family:'Liberation Serif', serif;font-size:18.5px;font-weight:400;color:#000;white-space:pre;">$23,500</span>
<span class=sf style="position:absolute;left:12.20px;top:419.80px;line-height:20.38px;font-family:'Liberation Serif', serif;font-size:18.4px;font-weight:400;color:#111;white-space:pre;transform:scaleX(0.92);transform-origin:left 0;">17</span>
<span class=sf style="position:absolute;left:39.40px;top:422.11px;line-height:20.49px;font-family:'Liberation Serif', serif;font-size:18.5px;font-weight:400;color:#000;white-space:pre;">Inventory payments:</span>
<span class=sf style="position:absolute;left:12.20px;top:444.30px;line-height:20.38px;font-family:'Liberation Serif', serif;font-size:18.4px;font-weight:400;color:#111;white-space:pre;transform:scaleX(0.92);transform-origin:left 0;">18</span>
<span class=sf style="position:absolute;left:67.40px;top:446.61px;line-height:20.49px;font-family:'Liberation Serif', serif;font-size:18.5px;font-weight:400;color:#000;white-space:pre;">Month of purchase</span>
<span class=sf style="position:absolute;left:616.08px;top:446.61px;line-height:20.49px;font-family:'Liberation Serif', serif;font-size:18.5px;font-weight:400;color:#000;white-space:pre;">60%</span>
<span class=sf style="position:absolute;left:12.20px;top:469.20px;line-height:20.38px;font-family:'Liberation Serif', serif;font-size:18.4px;font-weight:400;color:#111;white-space:pre;transform:scaleX(0.92);transform-origin:left 0;">19</span>
<span class=sf style="position:absolute;left:67.40px;top:471.51px;line-height:20.49px;font-family:'Liberation Serif', serif;font-size:18.5px;font-weight:400;color:#000;white-space:pre;">Month following purchase</span>
<span class=sf style="position:absolute;left:616.08px;top:471.51px;line-height:20.49px;font-family:'Liberation Serif', serif;font-size:18.5px;font-weight:400;color:#000;white-space:pre;">40%</span>
<span class=sf style="position:absolute;left:12.20px;top:493.60px;line-height:20.38px;font-family:'Liberation Serif', serif;font-size:18.4px;font-weight:400;color:#111;white-space:pre;transform:scaleX(0.92);transform-origin:left 0;">20</span>
<span class=sf style="position:absolute;left:12.20px;top:518.40px;line-height:20.38px;font-family:'Liberation Serif', serif;font-size:18.4px;font-weight:400;color:#111;white-space:pre;transform:scaleX(0.92);transform-origin:left 0;">21</span>
<span class=sf style="position:absolute;left:39.40px;top:520.71px;line-height:20.49px;font-family:'Liberation Serif', serif;font-size:18.5px;font-weight:400;color:#000;white-space:pre;">Total budgeted selling &amp; administrative expenses in March</span>
<span class=sf style="position:absolute;left:589.88px;top:520.71px;line-height:20.49px;font-family:'Liberation Serif', serif;font-size:18.5px;font-weight:400;color:#000;white-space:pre;">$12,500</span>
<span class=sf style="position:absolute;left:12.20px;top:543.20px;line-height:20.38px;font-family:'Liberation Serif', serif;font-size:18.4px;font-weight:400;color:#111;white-space:pre;transform:scaleX(0.92);transform-origin:left 0;">22</span>
<span class=sf style="position:absolute;left:39.40px;top:545.51px;line-height:20.49px;font-family:'Liberation Serif', serif;font-size:18.5px;font-weight:400;color:#000;white-space:pre;">Budgeted selling &amp; administrative depreciation in March</span>
<span class=sf style="position:absolute;left:599.12px;top:545.51px;line-height:20.49px;font-family:'Liberation Serif', serif;font-size:18.5px;font-weight:400;color:#000;white-space:pre;">$3,200</span>
<span class=sf style="position:absolute;left:12.20px;top:567.90px;line-height:20.38px;font-family:'Liberation Serif', serif;font-size:18.4px;font-weight:400;color:#111;white-space:pre;transform:scaleX(0.92);transform-origin:left 0;">23</span>
<span class=sf style="position:absolute;left:12.20px;top:592.60px;line-height:20.38px;font-family:'Liberation Serif', serif;font-size:18.4px;font-weight:400;color:#111;white-space:pre;transform:scaleX(0.92);transform-origin:left 0;">24</span>
<span class=sf style="position:absolute;left:39.40px;top:594.91px;line-height:20.49px;font-family:'Liberation Serif', serif;font-size:18.5px;font-weight:400;color:#000;white-space:pre;">Other budgeted cash disbursements in March</span>
<span class=sf style="position:absolute;left:12.20px;top:617.60px;line-height:20.38px;font-family:'Liberation Serif', serif;font-size:18.4px;font-weight:400;color:#111;white-space:pre;transform:scaleX(0.92);transform-origin:left 0;">25</span>
<span class=sf style="position:absolute;left:67.40px;top:619.91px;line-height:20.49px;font-family:'Liberation Serif', serif;font-size:18.5px;font-weight:400;color:#000;white-space:pre;">Equipment purchases</span>
<span class=sf style="position:absolute;left:589.88px;top:619.91px;line-height:20.49px;font-family:'Liberation Serif', serif;font-size:18.5px;font-weight:400;color:#000;white-space:pre;">$14,000</span>
<span class=sf style="position:absolute;left:12.20px;top:642.20px;line-height:20.38px;font-family:'Liberation Serif', serif;font-size:18.4px;font-weight:400;color:#111;white-space:pre;transform:scaleX(0.92);transform-origin:left 0;">26</span>
<span class=sf style="position:absolute;left:67.40px;top:644.51px;line-height:20.49px;font-family:'Liberation Serif', serif;font-size:18.5px;font-weight:400;color:#000;white-space:pre;">Dividends to be paid</span>
<span class=sf style="position:absolute;left:599.12px;top:644.51px;line-height:20.49px;font-family:'Liberation Serif', serif;font-size:18.5px;font-weight:400;color:#000;white-space:pre;">$2,000</span>
<span class=sf style="position:absolute;left:12.20px;top:664.50px;line-height:20.38px;font-family:'Liberation Serif', serif;font-size:18.4px;font-weight:400;color:#111;white-space:pre;transform:scaleX(0.92);transform-origin:left 0;">27</span>
<span class=sf style="position:absolute;left:12.20px;top:687.90px;line-height:20.38px;font-family:'Liberation Serif', serif;font-size:18.4px;font-weight:400;color:#111;white-space:pre;transform:scaleX(0.92);transform-origin:left 0;">28</span>
<span class=sf style="position:absolute;left:39.40px;top:690.21px;line-height:20.49px;font-family:'Liberation Serif', serif;font-size:18.5px;font-weight:400;color:#000;white-space:pre;">Minimum cash balance to be maintained</span>
<span class=sf style="position:absolute;left:589.88px;top:690.21px;line-height:20.49px;font-family:'Liberation Serif', serif;font-size:18.5px;font-weight:400;color:#000;white-space:pre;">$10,000</span>
<span class=sf style="position:absolute;left:12.20px;top:712.60px;line-height:20.38px;font-family:'Liberation Serif', serif;font-size:18.4px;font-weight:400;color:#111;white-space:pre;transform:scaleX(0.92);transform-origin:left 0;">29</span>
<span class=sf style="position:absolute;left:39.40px;top:714.91px;line-height:20.49px;font-family:'Liberation Serif', serif;font-size:18.5px;font-weight:400;color:#000;white-space:pre;">March 1 cash balance</span>
<span class=sf style="position:absolute;left:590.55px;top:714.91px;line-height:20.49px;font-family:'Liberation Serif', serif;font-size:18.5px;font-weight:400;color:#000;white-space:pre;">$11,500</span>
<span class=sf style="position:absolute;left:12.20px;top:737.10px;line-height:20.38px;font-family:'Liberation Serif', serif;font-size:18.4px;font-weight:400;color:#111;white-space:pre;transform:scaleX(0.92);transform-origin:left 0;">30</span>
<span class=sf style="position:absolute;left:39.40px;top:739.41px;line-height:20.49px;font-family:'Liberation Serif', serif;font-size:18.5px;font-weight:400;color:#000;white-space:pre;">March 1 outstanding borrowings</span>
<span class=sf style="position:absolute;left:631.50px;top:739.41px;line-height:20.49px;font-family:'Liberation Serif', serif;font-size:18.5px;font-weight:400;color:#000;white-space:pre;">$0</span>
<span class=sf style="position:absolute;left:12.20px;top:761.80px;line-height:20.38px;font-family:'Liberation Serif', serif;font-size:18.4px;font-weight:400;color:#111;white-space:pre;transform:scaleX(0.92);transform-origin:left 0;">31</span>
<span class=sf style="position:absolute;left:39.40px;top:764.11px;line-height:20.49px;font-family:'Liberation Serif', serif;font-size:18.5px;font-weight:400;color:#000;white-space:pre;">March 1 interest due</span>
<span class=sf style="position:absolute;left:631.50px;top:764.11px;line-height:20.49px;font-family:'Liberation Serif', serif;font-size:18.5px;font-weight:400;color:#000;white-space:pre;">$0</span>
<span class=sf style="position:absolute;left:12.20px;top:784.30px;line-height:20.38px;font-family:'Liberation Serif', serif;font-size:18.4px;font-weight:400;color:#111;white-space:pre;transform:scaleX(0.92);transform-origin:left 0;">32</span>
<span class=sf style="position:absolute;left:12.20px;top:808.40px;line-height:20.38px;font-family:'Liberation Serif', serif;font-size:18.4px;font-weight:400;color:#111;white-space:pre;transform:scaleX(0.92);transform-origin:left 0;">33</span>
<span class=sf style="position:absolute;left:39.40px;top:810.71px;line-height:20.49px;font-family:'Liberation Serif', serif;font-size:18.5px;font-weight:400;color:#000;white-space:pre;">The company has a line of credit available to bolster the cash balance as needed.</span>
<span class=sf style="position:absolute;left:12.20px;top:830.20px;line-height:20.38px;font-family:'Liberation Serif', serif;font-size:18.4px;font-weight:400;color:#111;white-space:pre;transform:scaleX(0.92);transform-origin:left 0;">34</span>
<div style="position:absolute;left:5px;top:852.9px;width:960px;height:9.4px;overflow:hidden"><span style="position:absolute;left:7.6px;top:3.6px;line-height:20px;font-family:'Liberation Serif',serif;font-size:17.6px;color:#111">35</span><span style="position:absolute;left:34.4px;top:3.4px;line-height:20px;font-family:'Liberation Serif',serif;font-size:18.5px;color:#000;white-space:pre">When preparing the cash budget, the company should borrow funds only if it is needed to maintain the required minimum</span></div>
<div style="position:absolute;left:968.3px;top:244.8px;width:20.7px;height:617.5px;background:#e8e8e8"></div>
<div style="position:absolute;left:968.3px;top:245.2px;width:20.5px;height:20.6px;box-sizing:border-box;border:1px solid #c3c3c3;background:#e8e8e8"></div>
<svg style="position:absolute;left:974.3px;top:251.8px;overflow:visible" width="9" height="5.4" viewBox="0 0 9 5.4"><path d="M0 5.2 L8.6 5.2 L4.3 0 Z" fill="#777"/></svg>
<div style="position:absolute;left:968.3px;top:396.6px;width:20.5px;height:300px;box-sizing:border-box;border:1.2px solid #c3c3c3;background:#fff"></div>
<div style="position:absolute;left:968.3px;top:840.5px;width:20.5px;height:21px;box-sizing:border-box;border:1px solid #c3c3c3;background:#e8e8e8"></div>
<svg style="position:absolute;left:974.3px;top:847.6px;overflow:visible" width="9" height="5.4" viewBox="0 0 9 5.4"><path d="M0 0 L8.6 0 L4.3 5.2 Z" fill="#777"/></svg>
<div style="position:absolute;left:5px;top:862px;width:984px;height:37px;background:#f4f4f4"></div>
<div style="position:absolute;left:5px;top:862.0px;width:960.4px;height:1.2px;background:#a9a9a9"></div>
<div style="position:absolute;left:965.4px;top:862.0px;width:24px;height:1.2px;background:#d0d0d0"></div>
<svg style="position:absolute;left:41.5px;top:873.8px;overflow:visible" width="6.5" height="9.5" viewBox="0 0 6.5 9.5"><path d="M6 0 L6 9 L0 4.5 Z" fill="#2f6b3f"/></svg>
<svg style="position:absolute;left:78.4px;top:873.8px;overflow:visible" width="6.5" height="9.5" viewBox="0 0 6.5 9.5"><path d="M0 0 L0 9 L6 4.5 Z" fill="#2f6b3f"/></svg>
<div style="position:absolute;left:110.8px;top:880.8px;width:2.8px;height:3px;background:#2f6b3f"></div>
<div style="position:absolute;left:116.2px;top:880.8px;width:2.8px;height:3px;background:#2f6b3f"></div>
<div style="position:absolute;left:121.6px;top:880.8px;width:2.8px;height:3px;background:#2f6b3f"></div>
<div style="position:absolute;left:135.2px;top:861.9px;width:132.4px;height:28.700000000000067px;box-sizing:border-box;border:1px solid #b4b4b4;border-top:none;background:#fff"></div>
<div style="position:absolute;left:135.2px;top:888.6px;width:132.4px;height:2.2px;background:#3a7149"></div>
<span style="position:absolute;left:152.30px;top:867.46px;line-height:18.43px;font-family:'Liberation Sans', sans-serif;font-size:16.5px;font-weight:700;color:#3a7149;white-space:pre;transform:scaleX(1.0188);transform-origin:left 0;">Budget Data</span>
<span style="position:absolute;left:296.00px;top:868.72px;line-height:17.88px;font-family:'Liberation Sans', sans-serif;font-size:16px;font-weight:400;color:#222;white-space:pre;transform:scaleX(0.9738);transform-origin:left 0;">Schedules and Cash Budget</span>
<div style="position:absolute;left:521.4px;top:867.6px;width:1px;height:21.4px;background:#bbb"></div>
<div style="position:absolute;left:532.8px;top:883px;width:2.6px;height:2.8px;background:#2f6b3f"></div>
<div style="position:absolute;left:538px;top:883px;width:2.6px;height:2.8px;background:#2f6b3f"></div>
<div style="position:absolute;left:543.2px;top:883px;width:2.6px;height:2.8px;background:#2f6b3f"></div>
<svg style="position:absolute;left:563.5px;top:869px;overflow:visible" width="22" height="21" viewBox="0 0 22 21"><circle cx="10.4" cy="10.2" r="9.2" fill="none" stroke="#777" stroke-width="1.3"/><path d="M10.4 5.4 L10.4 15 M5.6 10.2 L15.2 10.2" stroke="#777" stroke-width="1.8"/></svg>
<div style="position:absolute;left:595px;top:869.2px;width:370.2px;height:20.2px;background:#e8e8e8"></div>
<div style="position:absolute;left:595px;top:869.2px;width:20.4px;height:20.2px;box-sizing:border-box;border:1px solid #c3c3c3;background:#e8e8e8"></div>
<svg style="position:absolute;left:601.6px;top:875px;overflow:visible" width="6" height="9" viewBox="0 0 6 9"><path d="M5.2 0 L5.2 8.4 L0 4.2 Z" fill="#777"/></svg>
<div style="position:absolute;left:617.4px;top:868.8px;width:234px;height:20.8px;box-sizing:border-box;border:1px solid #c3c3c3;background:#fff"></div>
<div style="position:absolute;left:945.4px;top:869.2px;width:20.2px;height:20.2px;box-sizing:border-box;border:1px solid #c3c3c3;background:#e8e8e8"></div>
<svg style="position:absolute;left:953.2px;top:875px;overflow:visible" width="6" height="9" viewBox="0 0 6 9"><path d="M0 0 L0 8.4 L5.2 4.2 Z" fill="#777"/></svg>
<div style="position:absolute;left:5px;top:899px;width:984px;height:27px;background:#3a7149"></div>
<span style="position:absolute;left:18.80px;top:905.67px;line-height:14.97px;font-family:'Liberation Sans', sans-serif;font-size:13.4px;font-weight:400;color:#fff;white-space:pre;transform:scaleX(0.9709);transform-origin:left 0;">READY</span>
<div style="position:absolute;left:621.5px;top:899px;width:48px;height:27px;background:#2c5d37"></div>
<svg style="position:absolute;left:636.5px;top:903.2px;overflow:visible" width="18" height="17" viewBox="0 0 18 17"><g fill="none" stroke="#e6efe8" stroke-width="1.2"><rect x="0.6" y="0.6" width="16" height="15"/><line x1="6" y1="0.6" x2="6" y2="15.6"/><line x1="11.3" y1="0.6" x2="11.3" y2="15.6"/><line x1="0.6" y1="5.6" x2="16.6" y2="5.6"/><line x1="0.6" y1="10.6" x2="16.6" y2="10.6"/></g></svg>
<svg style="position:absolute;left:683.8px;top:903.2px;overflow:visible" width="18" height="17" viewBox="0 0 18 17"><g fill="none" stroke="#e6efe8" stroke-width="1.2"><rect x="0.6" y="0.6" width="16.6" height="15.4"/><rect x="4" y="3.4" width="9.8" height="9.8"/><line x1="6" y1="6.2" x2="11.8" y2="6.2"/><line x1="6" y1="8.3" x2="11.8" y2="8.3"/><line x1="6" y1="10.4" x2="11.8" y2="10.4"/></g></svg>
<svg style="position:absolute;left:730.6px;top:903.4px;overflow:visible" width="18" height="17" viewBox="0 0 18 17"><g fill="none" stroke="#e6efe8" stroke-width="1.3"><rect x="0.7" y="0.7" width="16.4" height="15.1"/><path d="M0.7 10.4 L11.4 10.4 L11.4 0.7"/></g><rect x="0.7" y="0.7" width="5.2" height="9.7" fill="#e6efe8"/><rect x="6.9" y="0.7" width="4.5" height="9.7" fill="#e6efe8"/></svg>
<div style="position:absolute;left:773px;top:910.6px;width:6.6px;height:2.2px;background:#fff"></div>
<div style="position:absolute;left:785.5px;top:911.2px;width:123px;height:1.1px;background:#fff"></div>
<div style="position:absolute;left:845px;top:904.6px;width:5px;height:13.8px;background:#fff"></div>
<div style="position:absolute;left:913.6px;top:910.6px;width:10.6px;height:2.2px;background:#fff"></div>
<div style="position:absolute;left:917.8px;top:906.4px;width:2.2px;height:10.6px;background:#fff"></div>
<span style="position:absolute;left:943.60px;top:904.93px;line-height:15.64px;font-family:'Liberation Sans', sans-serif;font-size:14px;font-weight:400;color:#fff;white-space:pre;transform:scaleX(0.9382);transform-origin:left 0;">100%</span>
<div style="position:absolute;left:5px;top:926px;width:984px;height:26.7px;background:#68b2c4"></div>
<div style="position:absolute;left:5px;top:926px;width:101.3px;height:24.6px;background:#000"></div>
<span style="position:absolute;left:18.80px;top:929.67px;line-height:16.20px;font-family:'Liberation Sans', sans-serif;font-size:14.5px;font-weight:700;color:#fff;white-space:pre;transform:scaleX(1.0152);transform-origin:left 0;">Attempt(s)</span>
<div style="position:absolute;left:916.4px;top:928px;width:61.6px;height:22.4px;background:#c9c9c9;border-radius:3px"></div>
<span style="position:absolute;left:934.60px;top:931.97px;line-height:17.32px;font-family:'Liberation Sans', sans-serif;font-size:15.5px;font-weight:700;color:#fff;white-space:pre;transform:scaleX(0.8693);transform-origin:left 0;">Hint</span>
<div style="position:absolute;left:2px;top:7px;width:990px;height:3px;background:#4a4a4a"></div>
<div style="position:absolute;left:2px;top:7px;width:1px;height:945.7px;background:#8a8a8a"></div>
<div style="position:absolute;left:3px;top:7px;width:2px;height:945.7px;background:#4a4a4a"></div>
<div style="position:absolute;left:989.2px;top:7px;width:2.8px;height:945.7px;background:#4a4a4a"></div>
</body></html>
